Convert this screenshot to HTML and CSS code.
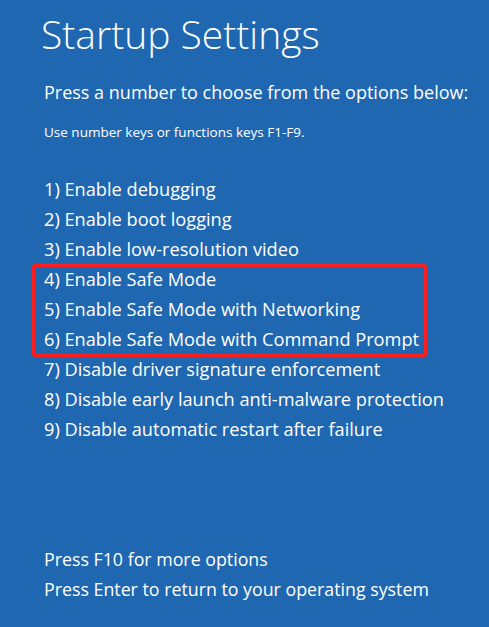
FILE: index.html
```html
<!DOCTYPE html>
<html lang="en">
<head>
    <meta charset="UTF-8">
    <meta name="viewport" content="width=device-width, initial-scale=1.0">
    <title>Startup Settings</title>
    <link rel="stylesheet" href="styles.css">
</head>
<body>
    <!-- Pantalla de opciones de arranque -->
    <div class="screen">
        <h1 class="title">Startup Settings</h1>
        <p class="prompt">Press a number to choose from the options below:</p>
        <p class="hint">Use number keys or functions keys F1-F9.</p>

        <!-- Lista de opciones -->
        <ul class="options">
            <li>1) Enable debugging</li>
            <li>2) Enable boot logging</li>
            <li>3) Enable low-resolution video</li>
            <li class="highlight">
                <ul class="group">
                    <li>4) Enable Safe Mode</li>
                    <li>5) Enable Safe Mode with Networking</li>
                    <li>6) Enable Safe Mode with Command Prompt</li>
                </ul>
            </li>
            <li>7) Disable driver signature enforcement</li>
            <li>8) Disable early launch anti-malware protection</li>
            <li>9) Disable automatic restart after failure</li>
        </ul>

        <!-- Pie con teclas extra -->
        <div class="footer">
            <p>Press F10 for more options</p>
            <p>Press Enter to return to your operating system</p>
        </div>
    </div>
</body>
</html>
```

FILE: styles.css
```css
html, body {
    margin: 0;
    height: 100%;
}

body {
    background-color: #1f67b1;
    color: #fff;
    font-family: "Open Sans", "Noto Sans", sans-serif;
}

/* Contenedor principal */
.screen {
    display: flex;
    flex-direction: column;
    height: 100%;
    padding: 0 0 0 44px;
    box-sizing: border-box;
}

.title {
    margin: 8px 0 0 -3px;
    font-size: 39px;
    font-weight: 300;
    line-height: 52px;
}

.prompt {
    margin: 20px 0 0;
    font-size: 18px;
    line-height: 24px;
}

.hint {
    margin: 19px 0 0;
    font-size: 13.5px;
    line-height: 18px;
}

.options {
    list-style: none;
    margin: 33px 0 0;
    padding: 0;
    font-size: 18.2px;
}

.options li {
    line-height: 30px;
}

/* Recuadro rojo sobre las opciones 4-6 */
.options .highlight {
    position: relative;
}

.options .highlight::before {
    content: "";
    position: absolute;
    top: 0;
    bottom: -3px;
    left: -12px;
    width: 395px;
    border: 3px solid #fa1e1e;
    border-radius: 3px;
    box-sizing: border-box;
}

.group {
    list-style: none;
    margin: 0;
    padding: 0;
}

.footer {
    margin-top: auto;
    margin-bottom: 23px;
    font-size: 17.8px;
}

.footer p {
    margin: 0;
    line-height: 30px;
}
```
